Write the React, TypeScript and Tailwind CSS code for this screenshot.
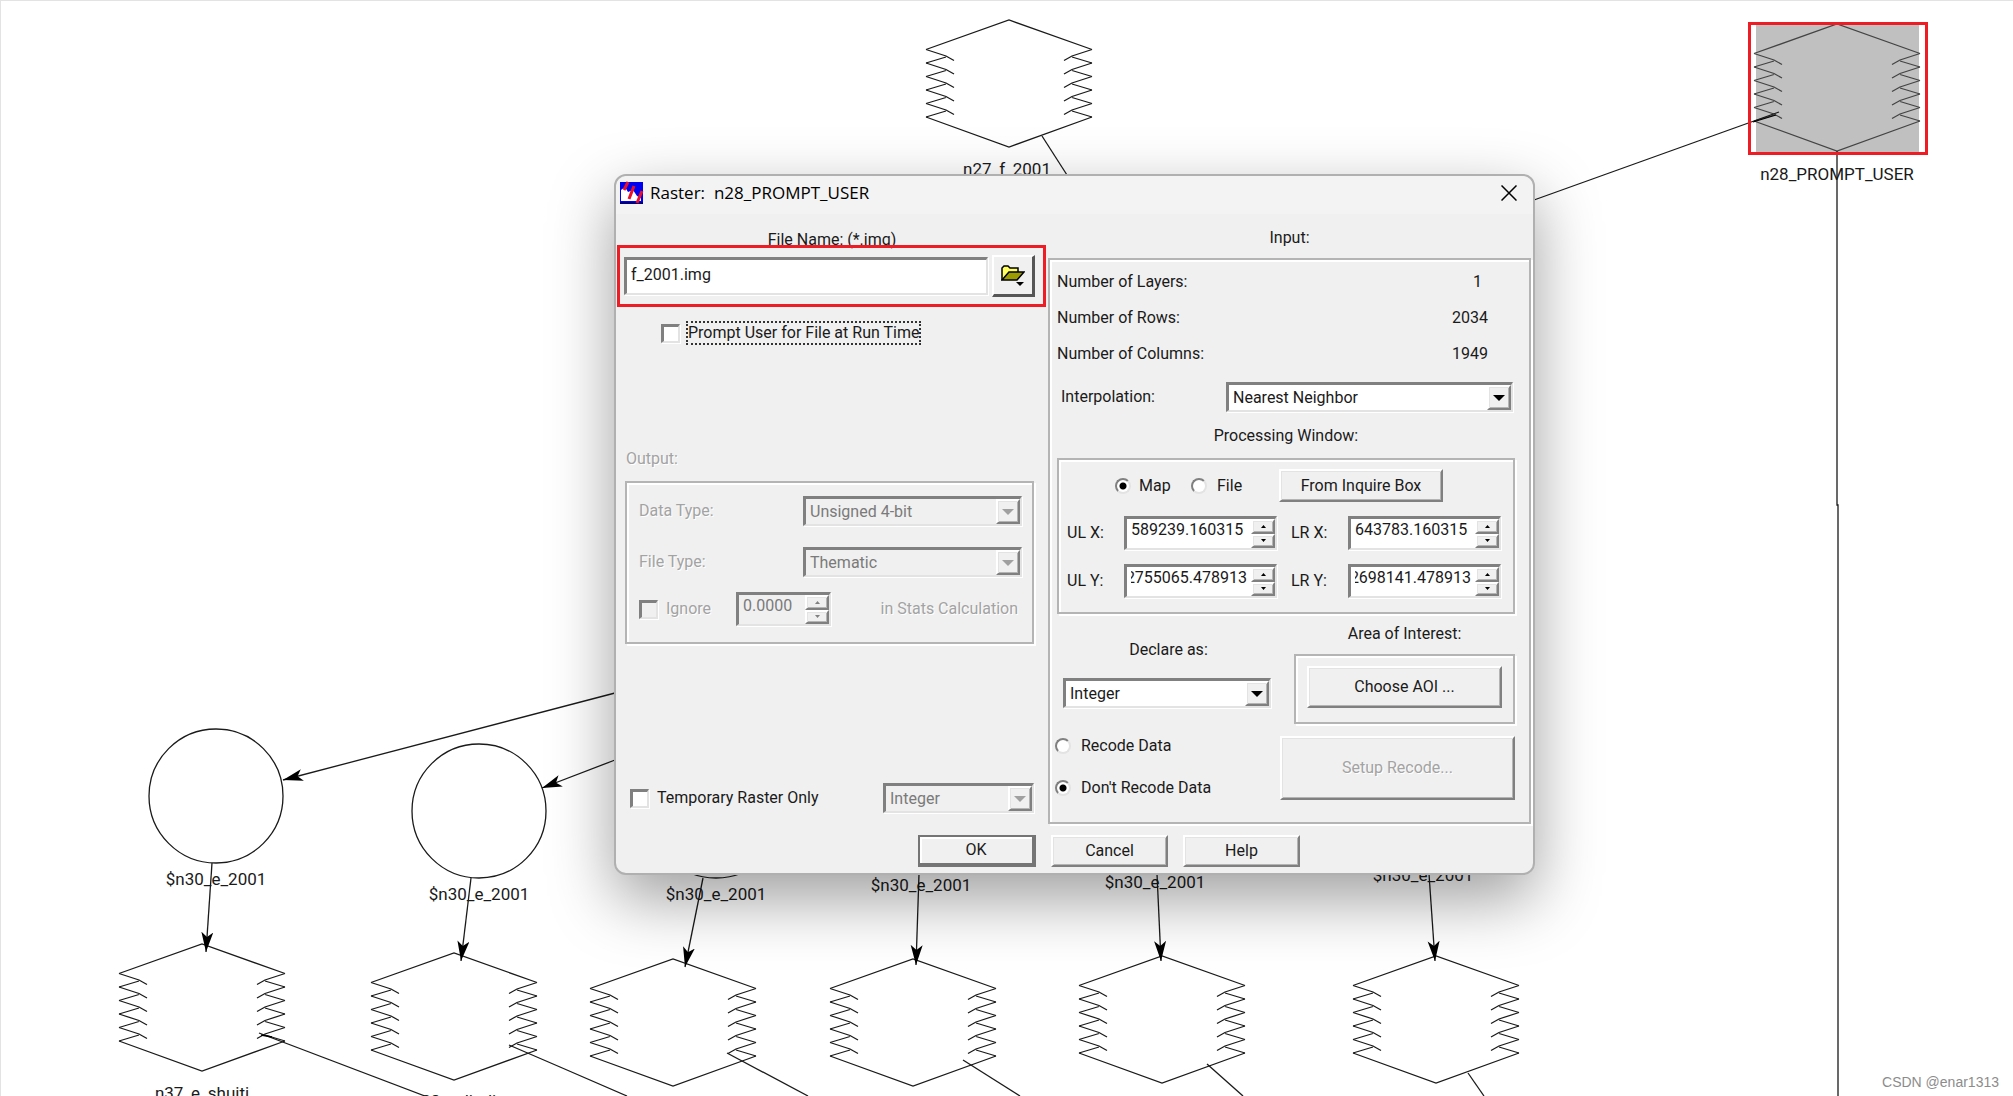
import React, {useState} from "react";

const NODE_TEXT = "Roboto, sans-serif";

const raised =
    "border-2 border-t-white border-l-white border-r-[#808080] border-b-[#808080] shadow-[inset_1px_1px_0_#e3e3e3,inset_-1px_-1px_0_#b4b4b4]";
const sunken =
    "border-t-[3px] border-l-[3px] border-r-2 border-b-2 border-t-[#808080] border-l-[#808080] border-r-[#e3e3e3] border-b-[#e3e3e3] shadow-[1px_1px_0_#fff]";
const etched =
    "border-2 border-[#b4b4b4] shadow-[inset_2px_2px_0_#fff,2px_2px_0_#fff]";
const disabledText = "text-[#a3a3a3] [text-shadow:1px_1px_0_#fff]";

// top point of every raster symbol
const rasters = [
    {x: 1009, y: 20},
    {x: 202, y: 944},
    {x: 454, y: 953},
    {x: 673, y: 959},
    {x: 913, y: 959},
    {x: 1162, y: 956},
    {x: 1436, y: 956},
];

const circles = [
    {x: 216, y: 796},
    {x: 479, y: 811},
    {x: 716, y: 811},
];

const nodeLabels = [
    {x: 1007, y: 175, text: "n27_f_2001"},
    {x: 1837, y: 180, text: "n28_PROMPT_USER"},
    {x: 216, y: 885, text: "$n30_e_2001"},
    {x: 479, y: 900, text: "$n30_e_2001"},
    {x: 716, y: 900, text: "$n30_e_2001"},
    {x: 921, y: 891, text: "$n30_e_2001"},
    {x: 1155, y: 888, text: "$n30_e_2001"},
    {x: 1423, y: 881, text: "$n30_e_2001"},
    {x: 202, y: 1099, text: "n37_e_shuiti"},
    {x: 454, y: 1107, text: "n38_e_lindi"},
];

const arrows = [
    "M615 693 L283 780",
    "M615 760 L542 788",
    "M212 863 L206 952",
    "M471 878 L461 961",
    "M703 878 L685 967",
    "M919 874 L916 965",
    "M1157 874 L1161 961",
    "M1429 874 L1435 961",
];

const lines = [
    "M1042 136 L1067 175",
    "M1534 200 L1779 112",
    "M1837 151 V505 H1838 V1096",
    "M259 1033 L425 1096",
    "M509 1045 L560 1067 L627 1096",
    "M727 1053 L808 1096",
    "M963 1060 L1020 1096",
    "M1207 1064 L1243 1096",
    "M1468 1073 L1484 1096",
];

const steps = [0, 1, 2, 3, 4];

function RasterShape({x, y, color}: {x: number; y: number; color: string}) {
    return (
        <g
            transform={`translate(${x} ${y})`}
            fill="none"
            stroke={color}
            strokeWidth="1.3"
        >
            <path d="M-83 29.5 L0 0 L83 29.5 M-83 97 L0 127 L83 97" />
            {steps.map((i) => (
                <path
                    key={i}
                    transform={`translate(0 ${i * 13.5})`}
                    d="M-83 29.5 L-63 36 L-55 40.5 M-83 43 L-63 37 M83 29.5 L63 36 L55 40.5 M83 43 L63 37"
                />
            ))}
        </g>
    );
}

function ModelCanvas() {
    return (
        <svg
            className="absolute -top-px -left-px"
            width="2013"
            height="1096"
            viewBox="0 0 2013 1096"
        >
            <defs>
                <marker
                    id="arrow"
                    markerUnits="userSpaceOnUse"
                    markerWidth="22"
                    markerHeight="14"
                    refX="20"
                    refY="6"
                    orient="auto"
                >
                    <path d="M0 0 L20 6 L0 12 L5 6 Z" fill="#000" />
                </marker>
            </defs>
            <rect x="1756" y="25" width="163" height="127" fill="#c0c0c0" />
            {rasters.map((r) => (
                <RasterShape key={r.x} x={r.x} y={r.y} color="#1a1a1a" />
            ))}
            <RasterShape x={1837} y={24} color="#444" />
            {circles.map((c) => (
                <circle
                    key={c.x}
                    cx={c.x}
                    cy={c.y}
                    r="67"
                    fill="none"
                    stroke="#1a1a1a"
                    strokeWidth="1.3"
                />
            ))}
            {arrows.map((d) => (
                <path
                    key={d}
                    d={d}
                    fill="none"
                    stroke="#1a1a1a"
                    strokeWidth="1.3"
                    markerEnd="url(#arrow)"
                />
            ))}
            {lines.map((d) => (
                <path
                    key={d}
                    d={d}
                    fill="none"
                    stroke="#1a1a1a"
                    strokeWidth="1.3"
                />
            ))}
            <path
                d="M1753 122 L1776 115 M261 1035 L272 1037"
                stroke="#000"
                strokeWidth="1.3"
            />
            <rect
                x="1749.5"
                y="23.5"
                width="177"
                height="130"
                fill="none"
                stroke="#ee1c24"
                strokeWidth="3"
            />
            {nodeLabels.map((n, i) => (
                <text
                    key={i}
                    x={n.x}
                    y={n.y}
                    textAnchor="middle"
                    fontSize="17"
                    fontFamily={NODE_TEXT}
                    fill="#1a1a1a"
                >
                    {n.text}
                </text>
            ))}
        </svg>
    );
}

function Combo(props: {
    label: string;
    value: string;
    className: string;
    disabled?: boolean;
}) {
    return (
        <div
            className={`relative h-[30px] ${sunken} ${props.className} ${
                props.disabled ? "bg-[#f0f0f0]" : "bg-white"
            }`}
        >
            <select
                aria-label={props.label}
                disabled={props.disabled}
                className="block h-full w-full appearance-none pl-1 text-[#1a1a1a] outline-none disabled:text-[#7a7a7a] disabled:opacity-100"
            >
                <option>{props.value}</option>
            </select>
            <span
                className={`pointer-events-none absolute top-0 right-0 bottom-0 flex w-6 items-center justify-center bg-[#f0f0f0] ${raised}`}
            >
                <svg width="12" height="6" viewBox="0 0 12 6">
                    <path
                        d="M0 0 H12 L6 6 Z"
                        fill={props.disabled ? "#a0a0a0" : "#000"}
                    />
                </svg>
            </span>
        </div>
    );
}

function Spinner(props: {
    id: string;
    value: string;
    className: string;
    disabled?: boolean;
}) {
    const [value, setValue] = useState(props.value);
    const fill = props.disabled ? "#808080" : "#000";
    const half = `flex flex-1 items-center justify-center bg-[#f0f0f0] ${raised}`;

    return (
        <div
            className={`flex h-[34px] ${sunken} ${props.className} ${
                props.disabled ? "bg-[#f0f0f0]" : "bg-white"
            }`}
        >
            <input
                id={props.id}
                type="text"
                dir="rtl"
                value={value}
                disabled={props.disabled}
                onChange={(e) => setValue(e.target.value)}
                className="mr-1 ml-1 h-[22px] min-w-0 flex-1 text-left outline-none disabled:text-[#7a7a7a]"
            />
            <div className="flex w-6 flex-col">
                <button
                    type="button"
                    aria-label="Increase"
                    disabled={props.disabled}
                    className={half}
                >
                    <svg width="5" height="3" viewBox="0 0 5 3">
                        <path d="M0 3 H5 L2.5 0 Z" fill={fill} />
                    </svg>
                </button>
                <button
                    type="button"
                    aria-label="Decrease"
                    disabled={props.disabled}
                    className={half}
                >
                    <svg width="5" height="3" viewBox="0 0 5 3">
                        <path d="M0 0 H5 L2.5 3 Z" fill={fill} />
                    </svg>
                </button>
            </div>
        </div>
    );
}

function Check(props: {id: string; disabled?: boolean}) {
    return (
        <input
            id={props.id}
            type="checkbox"
            disabled={props.disabled}
            className={`size-[19px] shrink-0 appearance-none bg-white checked:bg-black disabled:bg-[#f0f0f0] ${sunken}`}
        />
    );
}

function Radio(props: {
    name: string;
    label: string;
    checked: boolean;
    onChange: () => void;
    className: string;
}) {
    return (
        <label className={`flex items-center ${props.className}`}>
            <input
                type="radio"
                name={props.name}
                checked={props.checked}
                onChange={props.onChange}
                className="size-4 appearance-none rounded-full border-2 border-t-[#808080] border-r-[#e3e3e3] border-b-[#e3e3e3] border-l-[#808080] bg-white checked:bg-[radial-gradient(circle,#000_3px,#fff_4px)]"
            />
            {props.label}
        </label>
    );
}

function PushButton(props: {
    children: React.ReactNode;
    className: string;
    disabled?: boolean;
}) {
    return (
        <button
            type="button"
            disabled={props.disabled}
            className={`bg-[#f0f0f0] ${raised} ${props.className} ${
                props.disabled ? disabledText : ""
            }`}
        >
            {props.children}
        </button>
    );
}

function TitleBar() {
    return (
        <div className="flex h-[38px] items-center rounded-t-xl bg-[#f3f3f3] pr-4 pb-1 pl-1 font-['Open_Sans',sans-serif] text-[17px] text-black">
            <svg width="24" height="24" viewBox="0 0 24 24">
                <rect x="0" y="1" width="23" height="22" fill="#0000f0" />
                <path
                    d="M1 9 L5 6 L8 11 L13 9 L17 15 L21 17 V20 H1 Z"
                    fill="#fff"
                />
                <path d="M0 22 H23" stroke="#000080" strokeWidth="2" />
                <path
                    d="M8 1 L4 9 M14 5 L9 18 M22 10 L17 22"
                    stroke="#e8102a"
                    strokeWidth="3"
                />
            </svg>
            <h1 className="ml-1.5 flex-1 whitespace-pre">
                Raster:{"  "}n28_PROMPT_USER
            </h1>
            <button type="button" aria-label="Close">
                <svg
                    width="16"
                    height="16"
                    viewBox="0 0 16 16"
                    stroke="#000"
                    strokeWidth="1.5"
                >
                    <path d="M0.5 0.5 L15.5 15.5 M15.5 0.5 L0.5 15.5" />
                </svg>
            </button>
        </div>
    );
}

function FilePanel() {
    const [fileName, setFileName] = useState("f_2001.img");

    return (
        <div className="flex w-[432px] flex-col">
            <label htmlFor="file_name" className="mt-3.5 text-center">
                File Name: (*.img)
            </label>
            <div className="relative -mt-[7px] ml-px flex h-[62px] w-[429px] items-center border-3 border-[#ee1c24] pr-2 pl-1">
                <input
                    id="file_name"
                    type="text"
                    value={fileName}
                    onChange={(e) => setFileName(e.target.value)}
                    className={`h-[38px] min-w-0 flex-1 bg-white pb-1 pl-1 outline-none ${sunken}`}
                />
                <button
                    type="button"
                    aria-label="Open file"
                    className="ml-1 flex h-[42px] w-[43px] items-center justify-center border-t-2 border-r-3 border-b-3 border-l-2 border-t-white border-r-[#555] border-b-[#555] border-l-white bg-[#f0f0f0]"
                >
                    <svg width="24" height="22" viewBox="0 0 24 22">
                        <path
                            d="M1 15 V3 L3 1 H7 L9 3 H17 V7"
                            fill="#ffff60"
                            stroke="#000"
                            strokeWidth="1.5"
                        />
                        <path
                            d="M1 15 L8 7 H23 L16 15 Z"
                            fill="#9c9c00"
                            stroke="#000"
                            strokeWidth="1.5"
                        />
                        <path d="M15 17 H23 L19 21 Z" fill="#000" />
                    </svg>
                </button>
            </div>

            <div className="mt-3.5 ml-[45px] flex items-center gap-1.5">
                <Check id="prompt_user" />
                <label
                    htmlFor="prompt_user"
                    className="border-2 border-dotted border-[#333] leading-5"
                >
                    Prompt User for File at Run Time
                </label>
            </div>

            <div className={`mt-[102px] ml-2.5 ${disabledText}`}>Output:</div>
            <div
                className={`mt-2.5 ml-[9px] flex h-[163px] w-[409px] flex-col pr-2.5 pl-3 ${etched}`}
            >
                <div className="mt-[13px] flex items-center justify-between">
                    <span className={disabledText}>Data Type:</span>
                    <Combo
                        label="Data Type"
                        value="Unsigned 4-bit"
                        className="w-[219px]"
                        disabled
                    />
                </div>
                <div className="mt-[21px] flex items-center justify-between">
                    <span className={disabledText}>File Type:</span>
                    <Combo
                        label="File Type"
                        value="Thematic"
                        className="w-[219px]"
                        disabled
                    />
                </div>
                <div className="mt-[15px] flex items-center">
                    <Check id="ignore" disabled />
                    <label
                        htmlFor="ignore"
                        className={`ml-2 w-[70px] ${disabledText}`}
                    >
                        Ignore
                    </label>
                    <Spinner
                        id="ignore_value"
                        value="0.0000"
                        className="w-[95px]"
                        disabled
                    />
                    <label
                        htmlFor="ignore_value"
                        className={`flex-1 pr-1 text-right ${disabledText}`}
                    >
                        in Stats Calculation
                    </label>
                </div>
            </div>

            <div className="mt-[139px] mr-3.5 ml-3.5 flex items-center">
                <Check id="temporary" />
                <label htmlFor="temporary" className="ml-2 flex-1">
                    Temporary Raster Only
                </label>
                <Combo
                    label="Temporary raster type"
                    value="Integer"
                    className="w-[151px]"
                    disabled
                />
            </div>
        </div>
    );
}

function ProcessingWindow() {
    const [unit, setUnit] = useState("map");

    return (
        <div className={`h-[156px] pl-2 ${etched}`}>
            <div className="mt-[9px] flex items-center pl-12">
                <Radio
                    name="unit"
                    label="Map"
                    checked={unit === "map"}
                    onChange={() => setUnit("map")}
                    className="w-[76px] gap-2"
                />
                <Radio
                    name="unit"
                    label="File"
                    checked={unit === "file"}
                    onChange={() => setUnit("file")}
                    className="w-[88px] gap-2.5"
                />
                <PushButton className="h-[33px] w-[164px]">
                    From Inquire Box
                </PushButton>
            </div>
            <div className="mt-3.5 grid grid-cols-[57px_153px_71px_153px] items-center gap-y-3.5">
                <label htmlFor="ul_x">UL X:</label>
                <Spinner id="ul_x" value="589239.160315" className="w-full" />
                <label htmlFor="lr_x" className="pl-3.5">
                    LR X:
                </label>
                <Spinner id="lr_x" value="643783.160315" className="w-full" />
                <label htmlFor="ul_y">UL Y:</label>
                <Spinner id="ul_y" value="2755065.478913" className="w-full" />
                <label htmlFor="lr_y" className="pl-3.5">
                    LR Y:
                </label>
                <Spinner id="lr_y" value="2698141.478913" className="w-full" />
            </div>
        </div>
    );
}

function InputPanel() {
    const [recode, setRecode] = useState(false);

    return (
        <div className="flex-1 pr-0.5">
            <div className="mt-3 text-center">Input:</div>
            <div
                className={`mt-2 flex h-[566px] flex-col pr-3.5 pl-[7px] ${etched}`}
            >
                <dl className="mt-1 grid grid-cols-[1fr_auto] pr-[27px] leading-9">
                    <dt>Number of Layers:</dt>
                    <dd className="pr-1.5 text-right">1</dd>
                    <dt>Number of Rows:</dt>
                    <dd className="text-right">2034</dd>
                    <dt>Number of Columns:</dt>
                    <dd className="text-right">1949</dd>
                </dl>
                <div className="mt-2.5 flex items-center justify-between pr-0.5 pl-1">
                    <span>Interpolation:</span>
                    <Combo
                        label="Interpolation"
                        value="Nearest Neighbor"
                        className="w-[287px]"
                    />
                </div>
                <div className="mt-3 mb-2.5 text-center">
                    Processing Window:
                </div>
                <ProcessingWindow />

                <div className="mt-2 flex justify-between">
                    <div className="w-[217px] pl-1.5">
                        <div className="mt-4 mb-4 text-center">Declare as:</div>
                        <Combo
                            label="Declare as"
                            value="Integer"
                            className="w-[208px]"
                        />
                    </div>
                    <div className="w-[221px]">
                        <div className="mb-2 text-center">
                            Area of Interest:
                        </div>
                        <div
                            className={`flex h-[70px] items-center justify-center pb-1 ${etched}`}
                        >
                            <PushButton className="h-[42px] w-[195px]">
                                Choose AOI ...
                            </PushButton>
                        </div>
                    </div>
                </div>

                <div className="mt-2.5 flex items-start justify-between">
                    <div className="-ml-0.5 flex flex-col gap-[18px]">
                        <Radio
                            name="recode"
                            label="Recode Data"
                            checked={recode}
                            onChange={() => setRecode(true)}
                            className="gap-2.5"
                        />
                        <Radio
                            name="recode"
                            label="Don't Recode Data"
                            checked={!recode}
                            onChange={() => setRecode(false)}
                            className="gap-2.5"
                        />
                    </div>
                    <PushButton className="mt-0.5 h-16 w-[235px]" disabled>
                        Setup Recode...
                    </PushButton>
                </div>
            </div>
        </div>
    );
}

export default function App() {
    return (
        <main className="relative min-h-screen overflow-hidden border-t border-l border-[#e3e3e3] bg-white font-[Roboto,sans-serif] text-base text-[#1a1a1a]">
            <ModelCanvas />

            <section
                role="dialog"
                aria-label="Raster"
                className="absolute top-[173px] left-[613px] w-[921px] rounded-xl border-2 border-[#b0b0b0] bg-[#f0f0f0] pb-1.5 shadow-[0_24px_64px_rgba(0,0,0,0.38)]"
            >
                <TitleBar />
                <div className="flex">
                    <FilePanel />
                    <InputPanel />
                </div>
                <div className="mt-[11px] ml-[302px] flex gap-[15px]">
                    <button
                        type="submit"
                        className="h-8 w-[118px] border-t-2 border-r-4 border-b-4 border-l-2 border-[#757575] bg-[#f0f0f0] shadow-[inset_2px_2px_0_#fff]"
                    >
                        OK
                    </button>
                    <PushButton className="h-8 w-[117px]">Cancel</PushButton>
                    <PushButton className="h-8 w-[117px]">Help</PushButton>
                </div>
            </section>

            <div className="absolute right-3.5 bottom-1 font-['Liberation_Sans',sans-serif] text-sm text-[#8c8c8c]">
                CSDN @enar1313
            </div>
        </main>
    );
}
